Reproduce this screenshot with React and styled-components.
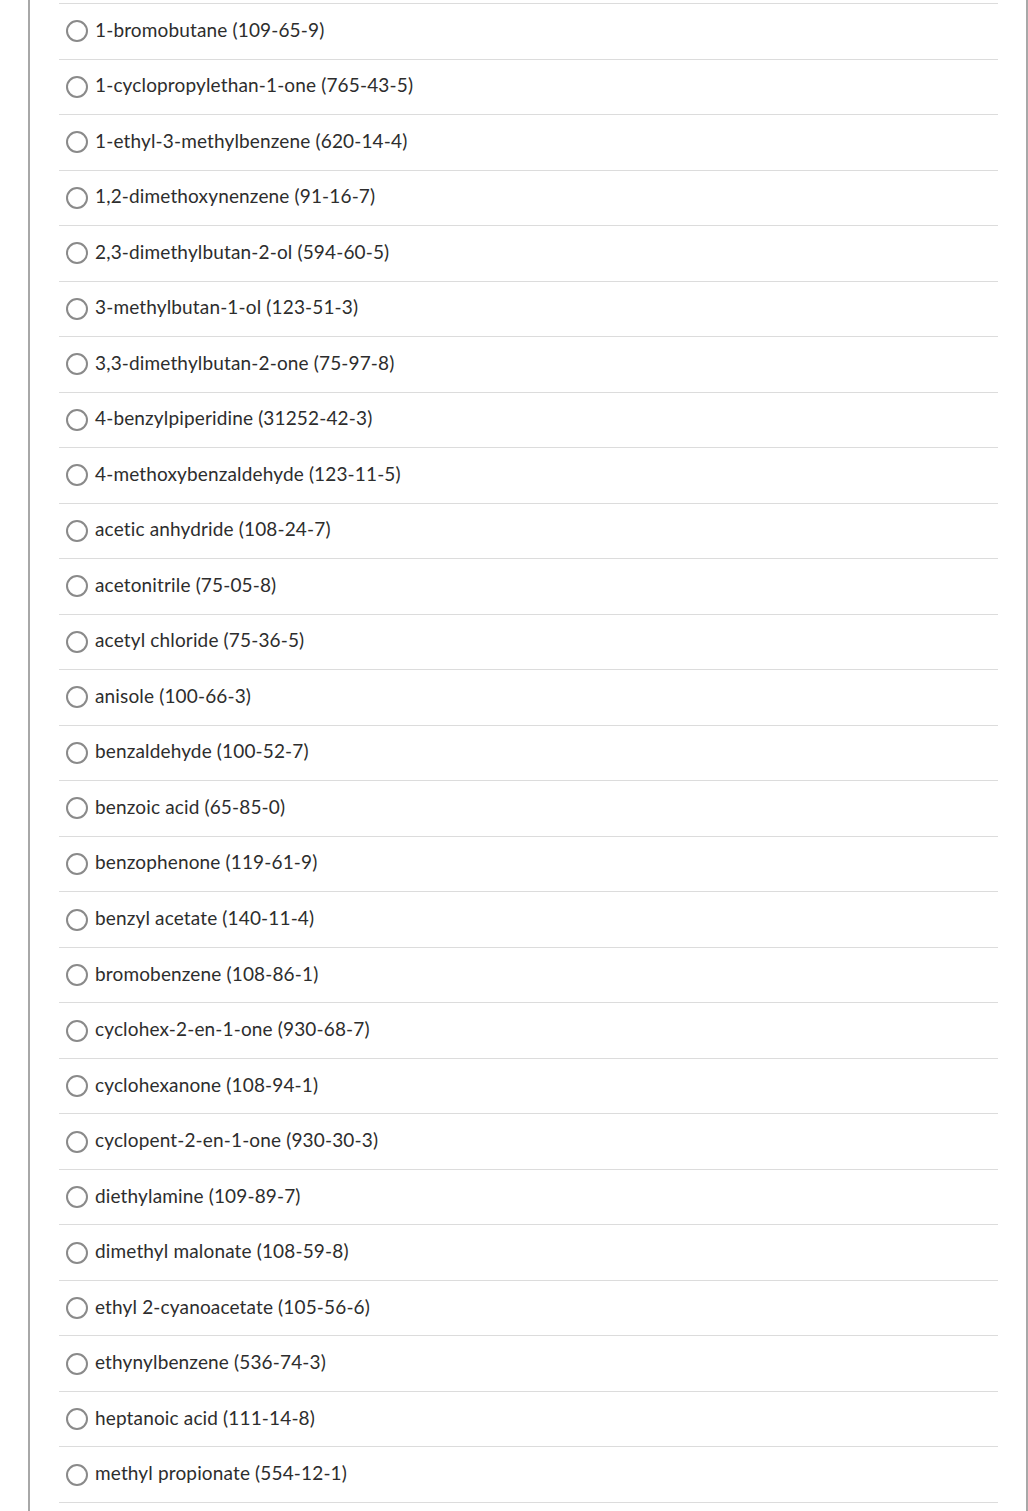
import React from "react";
import styled, { createGlobalStyle } from "styled-components";

const GlobalStyle = createGlobalStyle`
  html, body { margin: 0; padding: 0; background: #fff; }
  body { font-family: "Lato", "Liberation Sans", sans-serif; }
`;

const Frame = styled.div`
  box-sizing: border-box;
  min-height: 1511px;
  margin-left: 28px;
  width: 1000px;
  border-left: 2px solid #a8a8a8;
  border-right: 2px solid #a8a8a8;
  padding: 3px 28px 0 29px;
`;

const List = styled.div`
  display: flex;
  flex-direction: column;
  border-bottom: 1px solid #dcdcdc;
`;

const Row = styled.label`
  box-sizing: border-box;
  height: 55.52px;
  display: flex;
  align-items: center;
  gap: 7px;
  padding-left: 7px;
  border-top: 1px solid #dcdcdc;
  cursor: pointer;
`;

const Radio = styled.span`
  box-sizing: border-box;
  width: 22px;
  height: 22px;
  border-radius: 50%;
  border: 2px solid #8a8a8a;
  flex: none;
`;

const Text = styled.span`
  font-family: "Lato", "Liberation Sans", sans-serif;
  font-size: 19px;
  color: #2d2d2d;
  letter-spacing: 0.15px;
  margin-bottom: 4px;
`;

const items = [
  "1-bromobutane (109-65-9)",
  "1-cyclopropylethan-1-one (765-43-5)",
  "1-ethyl-3-methylbenzene (620-14-4)",
  "1,2-dimethoxynenzene (91-16-7)",
  "2,3-dimethylbutan-2-ol (594-60-5)",
  "3-methylbutan-1-ol (123-51-3)",
  "3,3-dimethylbutan-2-one (75-97-8)",
  "4-benzylpiperidine (31252-42-3)",
  "4-methoxybenzaldehyde (123-11-5)",
  "acetic anhydride (108-24-7)",
  "acetonitrile (75-05-8)",
  "acetyl chloride (75-36-5)",
  "anisole (100-66-3)",
  "benzaldehyde (100-52-7)",
  "benzoic acid (65-85-0)",
  "benzophenone (119-61-9)",
  "benzyl acetate (140-11-4)",
  "bromobenzene (108-86-1)",
  "cyclohex-2-en-1-one (930-68-7)",
  "cyclohexanone (108-94-1)",
  "cyclopent-2-en-1-one (930-30-3)",
  "diethylamine (109-89-7)",
  "dimethyl malonate (108-59-8)",
  "ethyl 2-cyanoacetate (105-56-6)",
  "ethynylbenzene (536-74-3)",
  "heptanoic acid (111-14-8)",
  "methyl propionate (554-12-1)",
];

export default function App() {
  return (
    <>
      <GlobalStyle />
      <Frame>
        <List>
          {items.map((t) => (
            <Row key={t}>
              <Radio />
              <Text>{t}</Text>
            </Row>
          ))}
        </List>
      </Frame>
    </>
  );
}
